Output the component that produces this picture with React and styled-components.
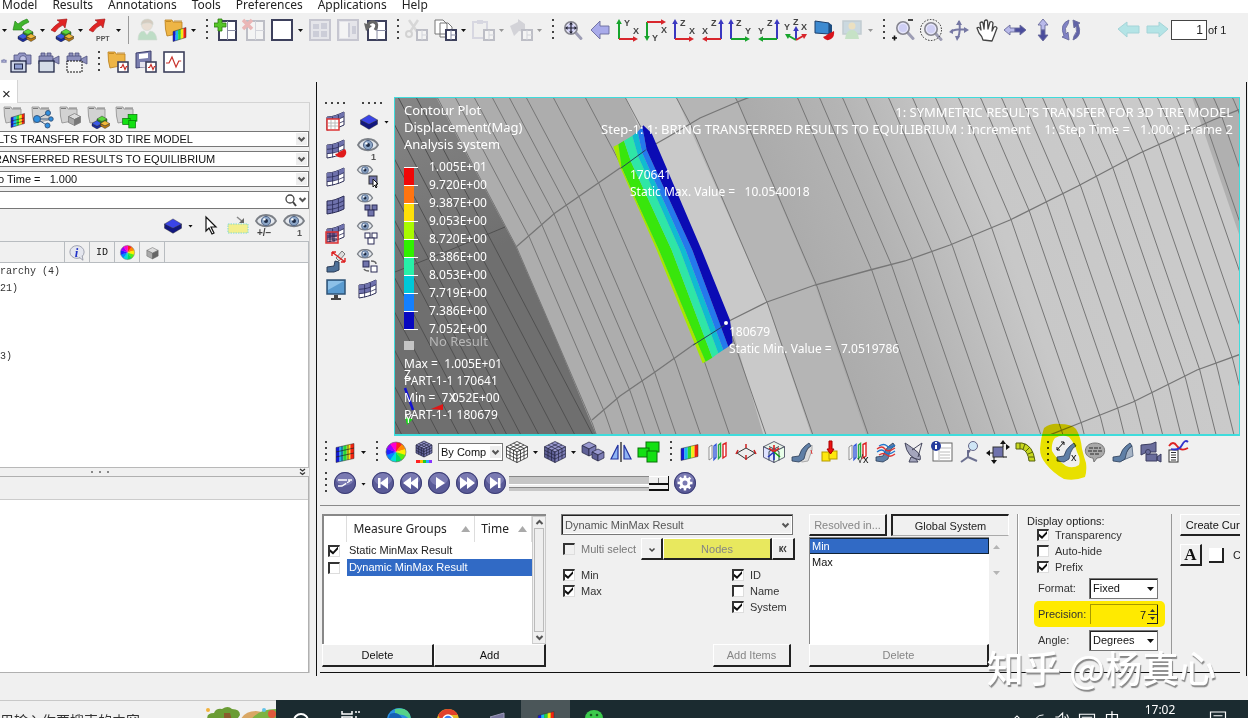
import React from "react";
import styled, { createGlobalStyle } from "styled-components";

const Global = createGlobalStyle`
  * { box-sizing: border-box; }
  body { margin: 0; background: #f0f0f0; }
  button, input, select { font: inherit; color: inherit; margin: 0; }
`;

/* ------------------------------------------------------------ icon pieces */

const Cube = ({ x, y, r, c = ["#9a9ad0", "#5f6096", "#7b7cb4"], grid, line = "#23243f" }) => {
  const h = r * 0.5;
  const third = [1 / 3, 2 / 3];
  return (
    <g stroke={line} strokeWidth=".7" strokeLinejoin="round">
      <path fill={c[0]} d={`M${x} ${y - r}l${r} ${h}l${-r} ${h}l${-r} ${-h}z`} />
      <path fill={c[1]} d={`M${x - r} ${y - h}l${r} ${h}v${r}l${-r} ${-h}z`} />
      <path fill={c[2]} d={`M${x + r} ${y - h}l${-r} ${h}v${r}l${r} ${-h}z`} />
      {grid &&
        third.map((t) => (
          <path
            key={t}
            fill="none"
            d={`M${x - r} ${y - h + r * t}l${r} ${h}l${r} ${-h}
               M${x - r + r * t} ${y - h + h * t}v${r}M${x + r - r * t} ${y - h + h * t}v${r}
               M${x - r + r * t} ${y - h + h * t}l${r} ${-h}M${x + r - r * t} ${y - h + h * t}l${-r} ${-h}`}
          />
        ))}
    </g>
  );
};

const Slab = ({ x, y, w = 5, c, d }) => (
  <g stroke="#1b1b1b" strokeWidth=".4">
    <path fill={d} d={`M${x - w} ${y}l${w} ${w * 0.5}l${w} ${-w * 0.5}v${w * 0.5}l${-w} ${w * 0.6}l${-w} ${-w * 0.6}z`} />
    <path fill={c} d={`M${x} ${y - w * 0.6}l${w} ${w * 0.6}l${-w} ${w * 0.5}l${-w} ${-w * 0.5}z`} />
  </g>
);

const Slabs = () => (
  <g>
    <Slab x={16} y={14} c="#59d83a" d="#2a9a1c" />
    <Slab x={11} y={18.5} c="#3c5be8" d="#1a2b9c" />
    <Slab x={19} y={18.5} w={4.6} c="#f0b83a" d="#b87a12" />
  </g>
);

const Mesh = ({ cells = "#6f72ad", line = "#2a2b55", partial }) => (
  <g stroke={line} strokeWidth="1" fill="none">
    <path fill={partial ? "#fff" : cells} d="M3 8C9 8 13 6 20 3V16C14 19 9 20 3 21Z" />
    {partial && <path fill={cells} stroke="none" d="M3 8C9 8 13 6 20 3V8L14.500 10V14C10 16 8 16 3 17Z" />}
    <path strokeWidth=".8" d="M3 12.300C9 12 14 11 20 7.600M3 16.600C9 16.500 14 15 20 12M8.600 7.600V20.300M14.400 5.800V18.500" />
  </g>
);

const rainbow = ["#1418d8", "#17b6f2", "#27d638", "#f4ea14", "#f5230f"];
const Rainbow = ({ x = 3, y = 3, w = 3.6, h = 15, line = "#333" }) => (
  <g>
    {rainbow.map((c, i) => (
      <path key={c} fill={c} d={`M${x + i * w} ${y + 3.5 - i * 0.8}l${w} -.8v${h}l${-w} .8z`} />
    ))}
    <path fill="none" stroke={line} strokeWidth=".5" d={`M${x} ${y + 3.5}l${w * 5} -4v${h}l${-w * 5} 4z`} />
  </g>
);

const Folder = ({ gold }) => (
  <g strokeWidth=".8">
    <path
      fill={gold ? "#eeb546" : "#d2d2d2"}
      stroke={gold ? "#b97f1c" : "#8d8d8d"}
      d="M2 2h7l1 2h9v11l-15 3Q2 12 2 2Z"
    />
    <path fill="none" stroke={gold ? "#b97f1c" : "#666"} d="M3 3.500h5M11 3h8" />
  </g>
);

const Eye = ({ y = 8, s = 1 }) => (
  <g transform={`translate(12 ${y}) scale(${s})`}>
    <path fill="#e4e8ee" stroke="#7c8087" strokeWidth="1.8" d="M-10 0C-6-8 6-8 10 0C6 7 -6 7 -10 0Z" />
    <circle r="4.6" fill="#8ba5c6" stroke="#54688a" />
    <circle r="2" fill="#1d2a44" />
    <circle cx="-1.6" cy="-1.6" r="1.2" fill="#fff" />
  </g>
);

const Page = ({ x = 3, y = 3, w = 19, h = 19, split = true }) => (
  <g fill="#fff" stroke="#3d405c" strokeWidth="2">
    <rect x={x} y={y} width={w} height={h} />
    {split && (
      <path strokeWidth="1" stroke="#8b8ea6" fill="none" d={`M${x + w / 2} ${y}v${h}M${x + w / 2} ${y + h / 2}h${w / 2}`} />
    )}
  </g>
);

const Arm = ({ c = "#5f7fa6" }) => (
  <path
    fill={c}
    stroke="#2b3c57"
    strokeWidth=".8"
    d="M2 17L9 16Q11 9 15 6L19 3L21 6L18 8Q15 12 14 19L9 22L2 21Z"
  />
);

const Lens = ({ x = 11, y = 10 }) => (
  <g>
    <path stroke="#9d9db4" strokeWidth="3" strokeLinecap="round" d={`M${x + 5} ${y + 5}l5 5.5`} />
    <circle cx={x} cy={y} r="6.2" fill="#e6e6fb" stroke="#85858f" strokeWidth="1.6" />
    <circle cx={x} cy={y} r="4" fill="#cfcff4" />
  </g>
);

const Camera = () => (
  <g fill="#9295c4" stroke="#4b4e7c" strokeWidth=".8">
    <path d="M5 5h4l1-2h6l1 2h5v9H5z" />
    <circle cx="14" cy="9" r="3.4" fill="#c5c7e6" />
  </g>
);

const Video = () => (
  <g fill="#8d90bd" stroke="#4b4e7c" strokeWidth=".8">
    <path d="M2 6h14v8H2zM16 9l6-3v8l-6-3zM4 6V3h4v3M10 6V3h4v3" />
  </g>
);

const Wave = ({ x, y, w }) => (
  <g>
    <rect x={x} y={y} width={w} height={w} fill="#fff" stroke="#3d405c" strokeWidth="1.6" />
    <path
      fill="none"
      stroke="#c8322b"
      strokeWidth="1.2"
      d={`M${x + 2} ${y + w * 0.55}l${w * 0.15} 0l${w * 0.15} ${-w * 0.3}l${w * 0.2} ${w * 0.5}l${w * 0.14} ${-w * 0.3}h${w * 0.12}`}
    />
  </g>
);

const Head = ({ x, y, a, c }) => <polygon fill={c} points="-5,-2.8 0,0 -5,2.8" transform={`translate(${x} ${y}) rotate(${a})`} />;

const R = "#d8262c";
const G = "#17a42c";
const B = "#3a38c0";

const Axes = ({ up, side, upC, sideC, flip, down }) => {
  const x0 = flip ? 21 : 3;
  const x1 = flip ? 2 : 22;
  const y0 = down ? 4 : 21;
  const y1 = down ? 23 : 1;
  return (
    <g fontFamily="Liberation Sans, sans-serif" fontWeight="700" fontSize="9" fill="#444">
      <path stroke={upC} strokeWidth="2" d={`M${x0} ${y0}V${down ? 18 : 6}`} />
      <path stroke={sideC} strokeWidth="2" d={`M${x0} ${y0}H${flip ? 6 : 18}`} />
      <Head x={x0} y={y1} a={down ? 90 : -90} c={upC} />
      <Head x={x1} y={y0} a={flip ? 180 : 0} c={sideC} />
      <text x={flip ? 11 : 8} y={down ? 23 : 8}>{up}</text>
      <text x={flip ? 2 : 17} y={down ? 15 : 16}>{side}</text>
    </g>
  );
};

const Round = ({ children }) => (
  <g>
    <circle cx="12" cy="12" r="11" fill="#5a5b98" />
    <ellipse cx="12" cy="8" rx="9" ry="6.5" fill="#8788bd" opacity=".7" />
    <circle cx="12" cy="12" r="10.5" fill="none" stroke="#3c3d74" />
    <g fill="#fff">{children}</g>
  </g>
);

const Wheel = ({ x = 12, y = 12, r = 10 }) => {
  const cs = ["#f22", "#f80", "#fe0", "#5e1", "#0d6", "#0dd", "#08f", "#22f", "#90f", "#f0c"];
  return (
    <g>
      {cs.map((c, i) => {
        const a = (i / 10) * 2 * Math.PI - 1.57;
        const b = ((i + 1.1) / 10) * 2 * Math.PI - 1.57;
        return (
          <path
            key={c}
            fill={c}
            d={`M${x} ${y}L${x + r * Math.cos(a)} ${y + r * Math.sin(a)}A${r} ${r} 0 0 1 ${x + r * Math.cos(b)} ${y + r * Math.sin(b)}Z`}
          />
        );
      })}
      <circle cx={x} cy={y} r={r} fill="none" stroke="#666" strokeWidth=".6" />
    </g>
  );
};

const Dbl = ({ d, fill = "#8a8cc8" }) => <path fill={fill} stroke="#6a6b9c" strokeWidth=".9" strokeLinejoin="round" d={d} />;

const greenSquares = (
  <g fill="#12e012" stroke="#067306" strokeWidth="1">
    <rect x="9" y="2" width="13" height="10" />
    <rect x="1" y="8" width="11" height="9" />
    <rect x="10" y="11" width="10" height="11" />
  </g>
);

const threeBoxes = (fill) => (
  <g fill={fill} stroke="#2a2b55">
    <rect x="9" y="12" width="5" height="5" />
    <rect x="16" y="12" width="5" height="5" />
    <rect x="12" y="17" width="6" height="6" />
  </g>
);

const strips = (
  <g fill="#fff" strokeWidth="1.4">
    <path stroke="#777" strokeWidth=".8" d="M3 7l3-2v13l-3 2z" />
    <path stroke="#3358d8" d="M8 6l2-1.500v13l-2 2z" />
    <path stroke="#27a844" d="M12.500 5l2-1.500v13l-2 2z" />
    <path stroke="#d22" d="M17 4.500l3-1.500v13l-3 2z" />
  </g>
);

const icons = {
  importModel: (
    <g>
      <path fill="#3fb52b" stroke="#1f7a12" strokeWidth=".6" d="M1 12L3 3l3 3Q9 3 15 1l2 3Q12 6 9 9l3 3z" />
      <Slabs />
    </g>
  ),
  exportModel: (
    <g>
      <path fill="#e02424" stroke="#9c1010" strokeWidth=".6" d="M17 1L7 2l3 2Q4 8 1 12l4 2Q8 9 13 7l2 3z" />
      <Slabs />
    </g>
  ),
  exportPpt: (
    <g>
      <path fill="#e02424" stroke="#9c1010" strokeWidth=".6" d="M17 1L7 2l3 2Q4 8 1 12l4 2Q8 9 13 7l2 3z" />
      <text x="8" y="23" fontFamily="Liberation Sans, sans-serif" fontSize="7" fontWeight="700" fill="#555">PPT</text>
    </g>
  ),
  person: (
    <g stroke="#8aa48a" strokeWidth=".6">
      <circle cx="12" cy="7" r="5.500" fill="#d9b08c" />
      <path fill="#8d6d42" d="M6 7Q6 1 13 1q6 1 5 6q-3-3-7-2q-3 0-5 2z" />
      <path fill="#3fae5c" d="M3 22q0-9 6-9l3 4 3-4q6 0 7 9z" />
    </g>
  ),
  folderRainbow: (
    <g>
      <Folder gold />
      <Rainbow x={10} y={10} w={2.600} h={10} />
    </g>
  ),
  pageAdd: (
    <g>
      <Page x={5} y={3} w={17} h={19} />
      <path fill="#56c628" stroke="#2c7a10" strokeWidth=".8" d="M4 1h4v4h4v4H8v4H4V9H0V5h4z" />
    </g>
  ),
  pageDelete: (
    <g>
      <Page x={5} y={3} w={17} h={19} />
      <path stroke="#d22" strokeWidth="3.500" d="M1 2l9 9M10 2l-9 9" />
    </g>
  ),
  window: <Page x={2} y={2} w={20} h={20} split={false} />,
  pageSwap: (
    <g>
      <rect x="2" y="2" width="20" height="20" fill="#c9cbdc" stroke="#5b5e80" strokeWidth="2" />
      <path fill="#72769c" d="M5 6h6v5H5zM13 5h6v6h-6zM5 13h6v6H5zM13 13h6v6h-6z" />
    </g>
  ),
  pageExpand: (
    <g>
      <rect x="2" y="2" width="20" height="20" fill="#c9cbdc" stroke="#5b5e80" strokeWidth="2" />
      <path fill="#fff" d="M4 4h8v16H4z" />
      <path fill="#72769c" d="M12 5h2v14h-2zM16 8h4v8h-4z" />
    </g>
  ),
  pageRevert: (
    <g>
      <Page x={4} y={3} w={18} h={19} />
      <path fill="none" stroke="#666" strokeWidth="3" d="M3 8Q6 3 10 4q5 2 1 8" />
      <path fill="#666" d="M0 5l8 3-6 5z" />
    </g>
  ),
  cut: (
    <g>
      <path stroke="#999" strokeWidth="2.500" fill="none" d="M4 2l9 13M13 2L5 14" />
      <circle cx="4" cy="16" r="3" fill="none" stroke="#888" strokeWidth="2" />
      <Page x={12} y={12} w={10} h={10} />
    </g>
  ),
  copy: (
    <g>
      <path fill="#fff" stroke="#777" strokeWidth="1" d="M2 2h8l4 4v10H2zM7 5h8l4 4v10H7z" />
      <Page x={13} y={12} w={10} h={10} />
    </g>
  ),
  paste: (
    <g>
      <path fill="#eee" stroke="#99b" strokeWidth="2" d="M2 4h14v16H2z" />
      <path fill="#99b" d="M6 2h6v4H6z" />
      <Page x={13} y={12} w={10} h={10} />
    </g>
  ),
  sendTo: (
    <g>
      <path fill="#8a8a9c" d="M1 8l8-4V1l7 5v8l-6-1-5 5z" />
      <Page x={13} y={12} w={10} h={10} />
    </g>
  ),
  zoomFit: (
    <g>
      <Lens />
      <path stroke="#223" strokeWidth="1.200" d="M11 5v10M6 10h10" />
      <path fill="#223" d="M11 4l2 2.500H9zM11 16l2-2.500H9zM5 10l2.500-2v4zM17 10l-2.500-2v4z" />
    </g>
  ),
  back: <Dbl fill="#a9abea" d="M3 12L12 3v5h9v8h-9v5z" />,
  axXY: <Axes up="Y" side="X" upC={G} sideC={R} />,
  axXYd: <Axes up="Y" side="X" upC={G} sideC={R} down />,
  axXZ: <Axes up="Z" side="X" upC={B} sideC={R} />,
  axXZf: <Axes up="Z" side="X" upC={B} sideC={R} flip />,
  axYZ: <Axes up="Z" side="Y" upC={B} sideC={G} />,
  axYZf: <Axes up="Z" side="Y" upC={B} sideC={G} flip />,
  iso: (
    <g fontFamily="Liberation Sans, sans-serif" fontWeight="700" fontSize="9" fill="#444">
      <path stroke={B} strokeWidth="2" d="M12 21v-9" />
      <path stroke={G} strokeWidth="2" d="M12 22l-7-4" />
      <path stroke={R} strokeWidth="2" d="M12 22l7-4" />
      <Head x={12} y={8} a={-90} c={B} />
      <Head x={1} y={16} a={210} c={G} />
      <Head x={23} y={16} a={-30} c={R} />
      <text x="0" y="12">Y</text>
      <text x="9" y="7">Z</text>
      <text x="17" y="12">X</text>
    </g>
  ),
  screenPaint: (
    <g>
      <path fill="#3d8ad0" stroke="#1d3f6b" d="M3 3l14 2v11L3 15z" />
      <path fill="#1e4d80" d="M17 5l3 2v10l-3-1z" />
      <path fill="#d8141c" d="M11 19q3-1 5-3l6-3q1 5-3 8-5 3-8-2z" />
    </g>
  ),
  screenUser: (
    <g>
      <path fill="#6fa0b8" stroke="#4f7384" strokeWidth="1.500" d="M3 3h18v13H3z" />
      <circle cx="12" cy="8" r="3.500" fill="#e0b84a" />
      <path fill="#5cc05c" d="M5 21q1-9 7-9t7 9z" />
    </g>
  ),
  zoomPM: (
    <g>
      <Lens x={12} y={10} />
      <path stroke="#111" strokeWidth="1.600" d="M17 2h5M1 20h5M3.500 17.500v5" />
    </g>
  ),
  zoomBox: (
    <g>
      <Lens x={12} y={11} />
      <ellipse cx="12" cy="12" rx="10.500" ry="10.500" fill="none" stroke="#222" strokeDasharray="1.500 1.500" />
    </g>
  ),
  rotate3d: (
    <g fill="none" stroke="#7678a4" strokeWidth="2">
      <path d="M4 13q8-3 16-1M11 20q3-8 1-17" />
      <g fill="#7678a4" stroke="none">
        <path d="M2 14l4-3v5zM22 12l-5-3v6zM12 2l3 5h-6zM10 23l-2-5h5z" />
      </g>
    </g>
  ),
  hand: (
    <path
      fill="#fff"
      stroke="#444"
      strokeWidth="1.300"
      strokeLinejoin="round"
      d="M8 22Q7 18 4 15L2 10q2-2 4 2L5 5q2-2 3 0l1 6 .500-8q2-2 3 0l.500 8 2-7q2-1 3 1l-1 8 2-4q2-1 3 1l-3 8-2 5z"
    />
  ),
  leftRight: (
    <g>
      <Dbl fill="#b9baea" d="M1 12l6-5v3h5v4H7v3z" />
      <Dbl fill="#4a4c9c" d="M23 12l-6-5v3h-5v4h5v3z" />
    </g>
  ),
  upDown: (
    <g>
      <Dbl fill="#b9baea" d="M12 1l5 6h-3v5h-4V7H7z" />
      <Dbl fill="#4a4c9c" d="M12 23l5-6h-3v-5h-4v5H7z" />
    </g>
  ),
  spin: (
    <g>
      <Dbl fill="#8082c6" d="M10 2Q0 6 5 18l-2 1 7 3-1-8-2 2Q5 10 9 6z" />
      <Dbl fill="#6163a8" d="M14 22Q24 18 19 6l2-1-7-3 1 8 2-2q2 6-2 10z" />
    </g>
  ),
  prev: <path fill="#b4e4e6" stroke="#a4d4d8" d="M1 11l9-7v4h12v7H10v4z" />,
  next: <path fill="#b4e4e6" stroke="#a4d4d8" d="M23 11l-9-7v4H2v7h12v4z" />,
  captureArea: (
    <g>
      <Camera />
      <rect x="2" y="11" width="15" height="11" fill="#cdd5e6" stroke="#222847" strokeWidth="1.300" />
      <rect x="5.500" y="14" width="8" height="5" fill="#8f9ed0" stroke="#222847" />
    </g>
  ),
  camera: <Camera />,
  videoArea: (
    <g>
      <Video />
      <rect x="2" y="11" width="15" height="11" fill="#d5dde8" stroke="#222847" strokeWidth="1.300" />
    </g>
  ),
  videoDash: (
    <g>
      <Video />
      <rect x="2" y="11" width="15" height="11" fill="#f4f4f4" stroke="#111" strokeDasharray="2 1" />
    </g>
  ),
  folderWave: (
    <g>
      <Folder gold />
      <Wave x={12} y={12} w={10} />
    </g>
  ),
  saveWave: (
    <g>
      <path fill="#7a7eae" stroke="#3d3f6c" d="M2 3l15-2v15l-15 2z" />
      <path fill="#fff" d="M5 4l9-1v5l-9 1z" />
      <path fill="#e4e4ee" d="M6 12h7v5l-7 .5z" />
      <Wave x={12} y={12} w={10} />
    </g>
  ),
  wave: <Wave x={2} y={2} w={20} />,
  folderMesh: (
    <g>
      <Folder />
      <Rainbow x={9} y={9} w={2.700} h={10} />
      <path stroke="#222" strokeWidth=".6" d="M9 16l13-3M9 19.500l13-3.500" />
    </g>
  ),
  folderNodes: (
    <g>
      <Folder />
      <g stroke="#3a5a80" fill="#2f8fe0">
        <path d="M7 14l11-6M7 14h14M7 14l11 7" />
        <circle cx="7" cy="14" r="3.500" />
        <circle cx="18" cy="8" r="2.500" />
        <circle cx="21" cy="14" r="2.200" />
        <circle cx="17.500" cy="20.500" r="2.500" />
      </g>
    </g>
  ),
  folderCube: (
    <g>
      <Folder />
      <Cube x={16.500} y={14.500} r={6} c={["#ddd", "#aaa", "#777"]} line="#777" />
    </g>
  ),
  folderSlabs: (
    <g>
      <Folder />
      <Slabs />
    </g>
  ),
  folderGreen: (
    <g>
      <Folder />
      <g transform="translate(8 8) scale(.68)">{greenSquares}</g>
    </g>
  ),
  slab: <Slab x={13} y={11} w={8.500} c="#3a44e6" d="#12177f" />,
  cursor: <path fill="#fff" stroke="#111" strokeWidth="1.200" d="M8 4v14l3-3 3 6 2-1-3-6h5z" />,
  highlight: (
    <g>
      <rect x="2" y="11" width="20" height="9" fill="#f3ef8e" stroke="#7fd8d0" strokeDasharray="1.500 1" />
      <path stroke="#888" strokeWidth="1.500" d="M11 4l6 5" />
      <path fill="#666" d="M18 10v-5l-5 5z" />
    </g>
  ),
  eyePM: (
    <g>
      <Eye />
      <text x="3" y="23" fontFamily="Liberation Sans, sans-serif" fontSize="10" fontWeight="700" fill="#444">+/−</text>
    </g>
  ),
  eyeOne: (
    <g>
      <Eye />
      <text x="15" y="23" fontFamily="Liberation Sans, sans-serif" fontSize="9" fontWeight="700" fill="#555">1</text>
    </g>
  ),
  info: (
    <g>
      <ellipse cx="12" cy="12" rx="9.500" ry="8.500" fill="#e4e6ee" stroke="#888c9c" />
      <path fill="#e4e6ee" stroke="#888c9c" d="M15 19l5 4-1-6" />
      <text x="9" y="18" fontFamily="Liberation Serif, serif" fontStyle="italic" fontSize="17" fontWeight="700" fill="#2132c8">i</text>
    </g>
  ),
  wheel: <Wheel />,
  greyCube: <Cube x={12} y={13} r={8} c={["#ddd", "#aaa", "#666"]} line="#666" />,
  meshRed: (
    <g>
      <Mesh partial />
      <rect x="3" y="10" width="12" height="11" fill="#fff" stroke="#d33" strokeWidth="1.500" />
      <path stroke="#bbb" d="M7 11v9M11 11v9M4 14h10M4 17h10" />
    </g>
  ),
  meshPaint: (
    <g>
      <Mesh partial />
      <path fill="#e01b1b" d="M11 17q3 0 4-2l6-3q3 4-1 8-6 2-9-3z" />
    </g>
  ),
  meshPart: <Mesh partial />,
  meshFull: <Mesh />,
  meshRedFull: (
    <g>
      <Mesh partial />
      <rect x="2" y="11" width="12" height="11" fill="#a03a6a" fillOpacity=".35" stroke="#d33" strokeWidth="1.500" />
      <path stroke="#2a2b55" d="M6 12v9M10 12v9M3 15h10M3 18h10" />
    </g>
  ),
  armSwap: (
    <g>
      <path fill="#4d7098" stroke="#2b3c57" d="M3 18l7-1 1-5 4 1v8l-5 2H3z" />
      <path fill="#ddd" stroke="#777" d="M12 9l6-7 3 3-6 7z" />
      <path fill="none" stroke="#d22" strokeWidth="1.400" d="M8 3l13 10M8 3v4M8 3h4M21 13v-4M21 13h-4" />
    </g>
  ),
  monitor: (
    <g>
      <rect x="3" y="3" width="18" height="14" fill="#5a9bd0" stroke="#2f5376" strokeWidth="1.500" />
      <path fill="#8cc0e8" d="M4 4h16L4 13z" />
      <path fill="#444" d="M10 18h4v3h3v2H7v-2h3z" />
    </g>
  ),
  eyePick: (
    <g>
      <g transform="translate(-3 -1)"><Eye y={6} s={0.75} /></g>
      <rect x="13" y="11" width="8" height="8" fill="#7174ac" stroke="#333" />
      <path fill="#fff" stroke="#111" d="M17 14v8l2-2 1 3 1-1-1-3h2z" />
    </g>
  ),
  eyeBoxes: (
    <g>
      <g transform="translate(-3 -1)"><Eye y={6} s={0.75} /></g>
      {threeBoxes("#7174ac")}
    </g>
  ),
  eyeHollow: (
    <g>
      <g transform="translate(-3 -1)"><Eye y={6} s={0.75} /></g>
      {threeBoxes("#fff")}
    </g>
  ),
  eyeReverse: (
    <g>
      <g transform="translate(-3 -1)"><Eye y={6} s={0.75} /></g>
      <rect x="7" y="12" width="6" height="6" fill="#7174ac" stroke="#2a2b55" />
      <rect x="15" y="17" width="6" height="6" fill="#fff" stroke="#2a2b55" />
      <path fill="none" stroke="#666" strokeWidth="1.500" d="M15 12q5 0 5 3M13 22q-4 0-5-2" />
    </g>
  ),
  contour: (
    <g>
      <Rainbow x={3} y={4} w={3.600} h={15} />
      <path stroke="#222" strokeWidth=".7" d="M3 12l18-4M3 17l18-4M9 6v15M15 5v15" />
    </g>
  ),
  rainbowPlain: <Rainbow x={3} y={5} w={3.400} h={12} />,
  cubeColor: (
    <g>
      <Cube x={12} y={9} r={8} grid />
      <path fill="#f22" d="M4 20h4v3H4z" />
      <path fill="#fb0" d="M8 20h3v3H8z" />
      <path fill="#2c2" d="M11 20h3v3h-3z" />
      <path fill="#2af" d="M14 20h3v3h-3z" />
      <path fill="#83f" d="M17 20h3v3h-3z" />
    </g>
  ),
  cubeWire: <Cube x={12} y={12} r={10.500} grid c={["#fff", "#fff", "#fff"]} line="#111" />,
  cubeFull: <Cube x={12} y={12} r={10.500} grid />,
  cubes: (
    <g>
      <Cube x={8} y={9} r={7} />
      <Cube x={17} y={15} r={6} />
    </g>
  ),
  mirror: (
    <g stroke="#2434a0" strokeWidth="1.200">
      <path fill="#8fb4f4" d="M9 5v14H2zM15 5v14h7z" />
      <path stroke="#111" d="M12 2v20" />
    </g>
  ),
  green: greenSquares,
  strips,
  vectorPlane: (
    <g fill="none" stroke="#333">
      <path fill="#eee" d="M3 13l9-5 9 5-9 6z" />
      <path stroke="#c22" strokeWidth="1.500" d="M12 8V4M2 14l2-4M22 14l-2-4M12 20v-5" />
    </g>
  ),
  cubeVector: (
    <g>
      <Cube x={12} y={12} r={10.500} c={["#e8f4e8", "#dfe3ff", "#e9ffe9"]} />
      <g fill="none" stroke="#345">
        <path d="M7 6.500l10 5v9M17 6.500l-10 5v9" />
      </g>
      <path fill="none" strokeWidth="1.600" stroke="#d22" d="M12 12V5M7 8l5 4 5-4" />
      <path fill="none" strokeWidth="1.600" stroke="#23b" d="M12 12l-6 5M12 12v8" />
      <path fill="none" strokeWidth="1.600" stroke="#191" d="M12 12l6 5" />
    </g>
  ),
  armDeform: (
    <g>
      <path fill="#ddd" stroke="#aaa" d="M7 19l7-1 3-8 5-5v5l-4 11-6 1z" />
      <Arm />
      <path fill="none" stroke="#d33" d="M21 10l1 4" />
    </g>
  ),
  isoValue: (
    <g stroke="#b59a00" fill="#ffe80f">
      <rect x="4" y="12" width="8" height="9" />
      <rect x="11" y="11" width="8" height="8" />
      <path stroke="#a00" fill="#e11" d="M11 1h3v8h2l-3.500 5L9 9h2z" />
    </g>
  ),
  stripsX: (
    <g>
      {strips}
      <text x="11" y="23" fontFamily="Liberation Sans, sans-serif" fontSize="11" fill="#111">√x</text>
    </g>
  ),
  stream: (
    <g>
      <Arm />
      <path fill="none" stroke="#d33" strokeWidth="1.300" d="M3 9q5-4 8 0t10-1M5 15q5-3 8 0t8-1" />
      <path fill="none" stroke="#27c" strokeWidth="1.300" d="M3 12q5-4 8 0t10-1M5 6q5-3 8 0t8-1" />
    </g>
  ),
  dish: (
    <g fill="#a4a6bd" stroke="#44465c">
      <path d="M3 3q2 15 15 17Q20 15 13 10 5 4 3 3z" />
      <path fill="none" d="M10 10l10-7M20 3l-4 14" />
      <path d="M9 17l-2 5h9l-2-3z" />
    </g>
  ),
  infoTable: (
    <g>
      <rect x="3" y="3" width="19" height="18" fill="#fff" stroke="#666" />
      <path stroke="#bbb" d="M10 8h12M10 12h10M10 15h10M10 18h10M9 8v13" />
      <circle cx="6" cy="6" r="5" fill="#233a9c" />
      <path stroke="#fff" strokeWidth="2" d="M6 5v4M6 2v1.500" />
    </g>
  ),
  tripodLens: (
    <g>
      <path stroke="#6c7090" strokeWidth="2" fill="none" d="M10 10v7l-7 5M10 17l9 4" />
      <circle cx="15" cy="6" r="4.500" fill="#cfe6f6" stroke="#668" />
      <path stroke="#668" strokeWidth="2" d="M12 10l-2 3" />
    </g>
  ),
  moveBox: (
    <g>
      <rect x="7" y="7" width="10" height="10" fill="#6f72ad" stroke="#333" />
      <path stroke="#111" d="M17 4v3M21 17h-4M4 13h3M8 21v-4" />
      <path fill="#111" d="M17 0l3 4h-6zM8 24l3-4H5zM0 13l4-3v6zM24 7l-4-3v6z" />
    </g>
  ),
  pipe: (
    <g fill="#c8d820" stroke="#55600a" strokeWidth="1">
      <path d="M2 3h6Q19 5 21 21h-6Q14 11 8 9L2 9z" />
      <path fill="none" d="M6 3v6M11 3.500l-2 6M16 7l-4 4M19 12l-5 2M20 17h-5" />
    </g>
  ),
  measure: (
    <g>
      <Arm />
      <path fill="none" stroke="#111" d="M2 10l7-8M2 10V7M2 10h3M9 2H6M9 2v3" />
      <text x="16" y="21" fontFamily="Liberation Sans, sans-serif" fontSize="11" fill="#111">x</text>
    </g>
  ),
  note: (
    <g fill="#a9a9a9" stroke="#777">
      <path d="M12 3c13 0 12 15 2 15l-3 4-1-4C-1 17 0 3 12 3z" />
      <path stroke="#555" strokeWidth="1.300" strokeDasharray="4 1" d="M6 8h12M5 11h14M7 14h10" />
    </g>
  ),
  arm: (
    <g>
      <path fill="#a6b4c6" stroke="#67788f" d="M10 21l6-10 5-5 1 10z" />
      <Arm />
    </g>
  ),
  cubeVideo: (
    <g fill="#6a6d9c" stroke="#3b3d60">
      <path d="M2 5l10-1 5-2v10H8l-6 3z" />
      <path d="M7 14h11v7H7zM18 17l4-3v8l-4-2z" />
      <circle cx="9" cy="12" r="2.500" />
    </g>
  ),
  report: (
    <g fill="none">
      <rect x="2" y="10" width="9" height="12" fill="#fff" stroke="#333" />
      <path stroke="#333" d="M4 12.500h5M4 15h5M4 17.500h5M4 20h5" />
      <path stroke="#d22" strokeWidth="1.800" d="M2 6q4-6 8 0t11 2" />
      <path stroke="#33c" strokeWidth="1.800" d="M4 9q8 2 11-4t6-3" />
    </g>
  ),
  animMode: <Round><path fill="none" stroke="#fff" strokeWidth="1.300" d="M5 9h14M5 15h4l8-5" strokeDasharray="9 1" /></Round>,
  first: <Round><path d="M7 7h2.500v10H7zM17 6v12l-8-6z" /></Round>,
  rewind: <Round><path d="M12 6v12l-8-6zM19 6v12l-8-6z" /></Round>,
  play: <Round><path d="M9 6v12l9-6z" /></Round>,
  forward: <Round><path d="M5 6v12l8-6zM12 6v12l8-6z" /></Round>,
  last: <Round><path d="M7 6v12l8-6zM15 7h2.500v10H15z" /></Round>,
  gear: (
    <Round>
      <circle cx="12" cy="12" r="4" fill="none" stroke="#fff" strokeWidth="3" />
      {[0, 45, 90, 135, 180, 225, 270, 315].map((a) => (
        <rect key={a} x="10.800" y="4.500" width="2.500" height="3.500" transform={`rotate(${a} 12 12)`} />
      ))}
    </Round>
  ),
  cortana: <circle cx="12" cy="13" r="7" fill="none" stroke="#fff" strokeWidth="2" />,
  taskView: <path fill="none" stroke="#fff" strokeWidth="1.500" d="M4 3v3h10V3M4 9h10v9H4zM18 3v2M18 8v12M21 3v2" />,
  edge: (
    <g>
      <circle cx="12" cy="12" r="12" fill="#2a8fe0" />
      <path fill="#54d28a" d="M8 1q16-3 16 12-6-8-16-6z" />
      <path fill="#1560b4" d="M3 6q8-3 12 4l-5 2q-6 2-9 0z" />
    </g>
  ),
  chrome: (
    <g>
      <circle cx="12" cy="12" r="11" fill="#e5b926" />
      <path fill="#e2402c" d="M2 7Q6 1 12 1q7 0 10 6H12L6 14z" />
      <circle cx="12" cy="12" r="5" fill="#3c7ef0" stroke="#fff" strokeWidth="1.500" />
    </g>
  ),
  hw: <path fill="#77759c" stroke="#9d9bb8" d="M5 9l14-4v14l-7 3v-8z" />,
  hwActive: <Rainbow x={4} y={4} w={3.200} h={13} />,
  wechat: (
    <g>
      <ellipse cx="11" cy="10" rx="9" ry="8" fill="#3ccb4c" />
      <circle cx="8" cy="7" r="1.300" fill="#175c20" />
      <circle cx="14" cy="7" r="1.300" fill="#175c20" />
    </g>
  ),
  chevUp: <path fill="none" stroke="#fff" strokeWidth="1.800" d="M5 12l7-7 7 7" />,
  net: <path fill="none" stroke="#fff" strokeWidth="1.600" d="M4 12Q10 4 18 5M8 15q4-4 9-4" />,
  speaker: <path fill="none" stroke="#fff" strokeWidth="1.600" d="M2 9h5l6-6v18M16 8q3 4 0 8M19 5q5 6 0 13" />,
  keyboard: <path fill="none" stroke="#fff" strokeWidth="1.600" d="M2 7h20v12H2zM5 11h14" />,
  notify: <path fill="none" stroke="#fff" strokeWidth="1.600" d="M2 4h20v15H2zM6 9h12" />,
};

const Glyph = ({ name, size = 24 }) => (
  <svg width={size} height={size} viewBox="0 0 24 24" aria-hidden="true">
    {icons[name]}
  </svg>
);

/* --------------------------------------------------------------- layout */

const Screen = styled.div`
  position: relative;
  display: flex;
  flex-direction: column;
  min-height: 100vh;
  overflow: hidden;
  background: #f0f0f0;
  color: #222;
  font: 11px "Liberation Sans", Arial, sans-serif;
`;

const MenuBar = styled.nav`
  display: flex;
  align-items: flex-start;
  gap: 15px;
  height: 13px;
  padding-left: 2px;
  background: #fff;
  font: 12px/10px "Noto Sans", "Open Sans", sans-serif;
`;

const MenuItem = styled.button`
  padding: 0;
  border: 0;
  background: none;
`;

const ToolRow = styled.div`
  display: flex;
  align-items: center;
  flex: none;
  height: ${(p) => p.$h || 32}px;
  padding-left: ${(p) => p.$pad || 0}px;
  white-space: nowrap;
`;

const ToolButton = styled.button`
  position: relative;
  display: flex;
  flex: none;
  align-items: center;
  justify-content: center;
  width: ${(p) => p.$w || 28}px;
  height: 28px;
  padding: 0;
  border: 0;
  background: none;
  opacity: ${(p) => (p.disabled ? 0.28 : 1)};
`;

const DropButton = styled.button`
  flex: none;
  width: 10px;
  height: 20px;
  padding: 2px 0 0 2px;
  border: 0;
  background: none;
  opacity: ${(p) => (p.disabled ? 0.4 : 1)};
  &::after {
    content: "";
    display: block;
    width: 5px;
    height: 3px;
    background: #111;
    clip-path: polygon(0 0, 100% 0, 50% 100%);
  }
`;

const Grip = styled.span`
  flex: none;
  width: 13px;
  height: 22px;
  padding: 0 4px 0 7px;
  background: repeating-linear-gradient(#444 0 2px, transparent 2px 6px) content-box;
`;

const Rule = styled.span`
  flex: none;
  width: 9px;
  height: 28px;
  background: linear-gradient(#9a9a9a, #9a9a9a) 4px 0 / 1px 100% no-repeat;
`;

const Spacer = styled.span`
  flex: none;
  width: ${(p) => p.$w}px;
`;

const ClippedTool = styled.span`
  display: flex;
  flex: none;
  justify-content: flex-end;
  width: 7px;
  overflow: hidden;
`;

const PageInput = styled.input`
  width: 36px;
  height: 20px;
  padding: 0 3px;
  border: 1px solid #444;
  background: #fff;
  font-size: 12px;
  text-align: right;
`;

const PageTotal = styled.label`
  padding-left: 1px;
  font-size: 11px;
`;

const Body = styled.div`
  display: grid;
  flex: 1;
  grid-template-columns: 310px minmax(0, 1fr);
`;

/* ----------------------------------------------------------- left panel */

const Browser = styled.aside`
  display: flex;
  flex-direction: column;
  padding: 2px 0 27px;
`;

const TabRow = styled.div`
  display: flex;
  height: 23px;
  border-bottom: 1px solid #d4d4d4;
`;

const Tab = styled.button`
  width: 18px;
  height: 23px;
  padding: 4px 4px 0 0;
  border: 0;
  border-right: 1px solid #d4d4d4;
  background: #fff;
  font-size: 15px;
  line-height: 20px;
`;

const BrowserBody = styled.div`
  display: flex;
  flex: 1;
  flex-direction: column;
  border-right: 1px solid #cfcfcf;
`;

const FieldStack = styled.div`
  display: flex;
  flex-direction: column;
  gap: 4px;
`;

const SelectFrame = styled.span`
  position: relative;
  display: flex;
  flex: none;
  width: ${(p) => (p.$w ? p.$w + "px" : "auto")};
  height: ${(p) => p.$h || 16}px;
  border: 1px solid #777;
  border-left-width: ${(p) => (p.$open ? 0 : 1)}px;
  background: ${(p) => p.$bg || "#fff"};
  box-shadow: ${(p) => (p.$sunk ? "inset 1px 1px #222, inset -1px -1px #fff" : "none")};
`;

const SelectBox = styled.select`
  flex: 1;
  min-width: 0;
  padding: 0 14px 0 ${(p) => p.$pad || 0}px;
  border: 0;
  background: transparent;
  appearance: none;
  opacity: 1;
  color: ${(p) => (p.disabled ? "#555" : "#111")};
  text-indent: ${(p) => p.$indent || 0}px;
`;

const Chevron = styled.svg`
  position: absolute;
  right: 1px;
  top: 50%;
  width: 11px;
  height: 12px;
  margin-top: -6px;
  background: ${(p) => p.$bg || "#eee"};
  pointer-events: none;
`;

const SearchField = styled.div`
  display: flex;
  align-items: center;
  height: 18px;
  border: 1px solid #777;
  border-left: 0;
  background: #fff;
`;

const SearchInput = styled.input`
  flex: 1;
  min-width: 0;
  height: 16px;
  padding: 0;
  border: 0;
  background: transparent;
`;

const FilterRow = styled.div`
  display: flex;
  align-items: center;
  justify-content: flex-end;
  height: 32px;
  padding-right: 1px;
`;

const ColumnHeads = styled.div`
  display: grid;
  grid-template-columns: 65px repeat(4, 25px) 1fr;
  height: 22px;
  border: 1px solid #b8bcc0;
  border-left: 0;
`;

const ColumnHead = styled.div`
  display: flex;
  align-items: center;
  justify-content: center;
  border-right: 1px solid #b8bcc0;
  font: 10px "Liberation Mono", monospace;
  color: #111;
  &:last-child { border-right: 0; }
`;

const Tree = styled.ul`
  flex: 205 1 0;
  margin: 0;
  padding: 0;
  border-right: 1px solid #b8b8b8;
  border-bottom: 1px solid #b8b8b8;
  background: #fff;
  color: #333;
  font: 10px/17px "Liberation Mono", monospace;
  list-style: none;
`;

const TreeItem = styled.li`
  height: 17px;
`;

const Splitter = styled.div`
  display: flex;
  align-items: center;
  justify-content: space-between;
  height: 8px;
  padding: 0 2px 0 91px;
`;

const SplitDots = styled.span`
  width: 18px;
  height: 2px;
  background: repeating-linear-gradient(90deg, #888 0 2px, transparent 2px 8px);
`;

const Entity = styled.div`
  flex: 174 1 0;
  padding-top: 22px;
  border: 1px solid #b0b0b0;
  border-left: 0;
  background: #f0f0f0;
`;

const EntityBody = styled.div`
  height: 100%;
  border-top: 1px solid #ccc;
  background: #fff;
`;

/* ------------------------------------------------------------ workspace */

const Workspace = styled.main`
  display: flex;
  flex-direction: column;
  min-width: 0;
  margin: 4px 1px 24px 6px;
  padding-top: 15px;
  border: 1px solid #111;
  border-width: 0 1px;
`;

const ViewRow = styled.div`
  display: flex;
  flex: 1;
  min-height: 339px;
  padding-right: 6px;
`;

const SideTools = styled.div`
  display: grid;
  flex: none;
  grid-template-columns: 28px 38px;
  grid-auto-rows: 28px;
  grid-template-rows: 10px;
  align-content: start;
  column-gap: 4px;
  width: 77px;
  padding-left: 5px;
`;

const SideCell = styled.div`
  display: flex;
  align-items: center;
`;

const SideGrip = styled.span`
  width: 20px;
  height: 2px;
  margin: 5px 0 0 ${(p) => p.$in}px;
  background: repeating-linear-gradient(90deg, #444 0 2px, transparent 2px 6px);
`;

const Viewer = styled.section`
  position: relative;
  flex: 1;
  min-width: 0;
  border: solid #3fdcdc;
  border-width: 1px 1px 2px;
  overflow: hidden;
  color: #fff;
  font: 13px/17px "Noto Sans", "Open Sans", sans-serif;
  white-space: pre;
`;

const Scene = styled.svg`
  position: absolute;
  inset: 0;
  width: 100%;
  height: 100%;
`;

const Overlay = styled.div`
  position: absolute;
  left: ${(p) => p.$x}px;
  top: ${(p) => p.$y}px;
  font-size: ${(p) => p.$size || 13}px;
`;

const Title = styled.div`
  position: absolute;
  top: 6px;
  right: 6px;
  text-align: right;
`;

const Legend = styled.div`
  display: grid;
  grid-auto-rows: 18px;
  padding-top: 5px;
  line-height: 18px;
  font-size: 12px;
`;

const LegendRow = styled.div`
  display: flex;
  align-items: center;
  gap: 11px;
`;

const Swatch = styled.span`
  position: relative;
  width: 14px;
  height: 18px;
  top: 9px;
  border-top: 1px solid #fff;
  background: ${(p) => p.$c} 0 0 / 10px 100% no-repeat;
`;

const NoResult = styled(LegendRow)`
  height: 17px;
  gap: 15px;
  color: #b8b8b8;
  font-size: 13px;
`;

const NoSwatch = styled.span`
  width: 10px;
  height: 9px;
  margin-top: 8px;
  background: #c4c4c4;
`;

const Marker = styled.svg`
  position: absolute;
  left: -14px;
  top: -15px;
  width: 52px;
  height: 60px;
  mix-blend-mode: multiply;
  pointer-events: none;
`;

const Frames = styled.input`
  appearance: none;
  width: 160px;
  height: 15px;
  margin: 0 2px 0 0;
  background: linear-gradient(#888 0 1px, #c6c6c6 1px 8px, #fff 8px 9px, #f0f0f0 9px 11px, #888 11px 12px, #c6c6c6 12px 15px);
  &::-webkit-slider-thumb {
    appearance: none;
    width: 20px;
    height: 15px;
    border-right: 1px solid #111;
    background:
      linear-gradient(#888, #888) 9px 2px / 1px 5px no-repeat,
      linear-gradient(#fff 0 1px, #f0f0f0 1px 7px, #111 7px 9px, #f0f0f0 9px 13px, #111 13px 15px);
  }
`;

const Divider = styled.hr`
  width: calc(100% - 9px);
  margin: 6px 6px 0 3px;
  border: 0;
  border-top: 1px solid #8a8a8a;
`;

/* --------------------------------------------------------- measure panel */

const Measure = styled.div`
  display: flex;
  flex: none;
  height: 167px;
  margin: 0 6px 3px 3px;
  padding: 8px 0 5px 2px;
  border-bottom: 1px solid #111;
  overflow: hidden;
`;

const Column = styled.div`
  display: flex;
  flex: ${(p) => (p.$w ? "none" : "1")};
  flex-direction: column;
  min-width: 0;
  width: ${(p) => (p.$w ? p.$w + "px" : "auto")};
  margin-left: ${(p) => p.$gap || 0}px;
`;

const Line = styled.div`
  display: flex;
  align-items: ${(p) => p.$align || "center"};
  justify-content: ${(p) => p.$justify || "flex-start"};
  height: ${(p) => (p.$h ? p.$h + "px" : "auto")};
  gap: ${(p) => p.$gap || 0}px;
  margin-top: ${(p) => p.$mt || 0}px;
  padding-left: ${(p) => p.$pl || 0}px;
  flex: ${(p) => (p.$grow ? 1 : "none")};
  min-height: 0;
`;

const PushButton = styled.button`
  flex: ${(p) => (p.$w ? "none" : 1)};
  width: ${(p) => (p.$w ? p.$w + "px" : "auto")};
  height: ${(p) => p.$h || 23}px;
  padding: 0;
  border: solid;
  border-width: 1px 2px 2px 1px;
  border-color: #fff #222 #222 #fff;
  background: ${(p) => p.$bg || "#f0f0f0"};
  color: ${(p) => (p.disabled ? "#858585" : "#111")};
  white-space: nowrap;
`;

const TableFrame = styled.div`
  display: flex;
  flex: 1;
  min-height: 0;
  border: solid #888;
  border-width: 2px 0 0 2px;
  background: #fff;
`;

const GroupTable = styled.table`
  flex: 1;
  border-collapse: collapse;
  table-layout: fixed;
  align-self: flex-start;
  background: #fff;
`;

const Th = styled.th`
  width: ${(p) => p.$w}px;
  height: 26px;
  padding: 0 4px 0 6px;
  border-right: 1px solid #ddd;
  font: 12px/26px "Noto Sans", "Open Sans", sans-serif;
  text-align: left;
  white-space: nowrap;
`;

const Sort = styled.span`
  float: right;
  width: 9px;
  height: 6px;
  margin-top: 10px;
  background: #aaa;
  clip-path: polygon(50% 0, 100% 100%, 0 100%);
`;

const Td = styled.td`
  height: 17px;
  padding: 0 0 0 ${(p) => p.$pl || 2}px;
  background: ${(p) => (p.$on ? "#316ac5" : "transparent")};
  color: ${(p) => (p.$on ? "#fff" : "#222")};
  line-height: 17px;
  white-space: nowrap;
`;

const ScrollBar = styled.div`
  display: flex;
  flex-direction: column;
  align-items: center;
  justify-content: space-between;
  width: 14px;
  border: 1px solid #ccc;
  background: #f0f0f0;
`;

const ScrollThumb = styled.div`
  flex: 1;
  width: 10px;
  border: 1px solid #bbb;
  background: #eee;
`;

const ArrowMark = styled.svg`
  width: 9px;
  height: 11px;
`;

const Check = styled.input.attrs({ type: "checkbox" })`
  appearance: none;
  flex: none;
  display: block;
  width: 12px;
  height: 12px;
  border: solid;
  border-width: 2px 1px 1px 2px;
  border-color: #333 #ddd #ddd #333;
  background: ${(p) => (p.disabled ? "#f0f0f0" : "#fff")};
  &:checked::after {
    content: "";
    display: block;
    width: 8px;
    height: 8px;
    background: #111;
    clip-path: polygon(0 35%, 38% 65%, 100% 0, 100% 35%, 38% 100%, 0 70%);
  }
`;

const CheckLabel = styled.label`
  display: flex;
  align-items: center;
  gap: 6px;
  height: 16px;
  color: ${(p) => (p.$off ? "#777" : "#333")};
`;

const Sunken = styled.div`
  flex: 1;
  height: 22px;
  border: solid;
  border-width: 2px 1px 1px 2px;
  border-color: #222 #fff #aaa #222;
  color: #222;
  line-height: 20px;
  text-align: center;
`;

const ListBox = styled.ul`
  flex: 1;
  margin: 0;
  padding: 0;
  border: solid #888;
  border-width: 1px 0 0 1px;
  background: #fff;
  list-style: none;
`;

const ListItem = styled.li`
  height: 16px;
  padding-left: 2px;
  line-height: 15px;
  border: 1px solid ${(p) => (p.$on ? "#123" : "transparent")};
  border-left: 0;
  background: ${(p) => (p.$on ? "#316ac5" : "transparent")};
  color: ${(p) => (p.$on ? "#fff" : "#111")};
`;

const ListArrows = styled.div`
  display: flex;
  flex-direction: column;
  gap: 14px;
  width: 20px;
  padding: 5px 0 0 3px;
`;

const Options = styled(Column)`
  padding-left: 9px;
  border: solid #999;
  border-width: 0 1px;
  box-shadow: inset 1px 0 #fff;
`;

const FieldLine = styled.div`
  display: flex;
  align-items: center;
  width: 131px;
  height: 26px;
  margin-left: 7px;
  padding: 0 7px 0 4px;
  border-radius: 5px;
  background: ${(p) => (p.$mark ? "#ffea00" : "transparent")};
`;

const FieldLabel = styled.label`
  flex: 1;
  color: #333;
`;

const NumberFrame = styled.span`
  display: flex;
  width: 68px;
  height: 20px;
  border: solid #a89a00;
  border-width: 1px 0 0 1px;
`;

const NumberBox = styled.input`
  flex: 1;
  min-width: 0;
  padding: 0 1px;
  border: 0;
  background: transparent;
  text-align: right;
`;

const Spin = styled.span`
  display: flex;
  flex-direction: column;
  justify-content: space-evenly;
  align-items: center;
  width: 11px;
  border: solid #222;
  border-width: 0 1px 1px 0;
`;

const ColorButton = styled.button`
  flex: none;
  width: 15px;
  height: 15px;
  padding: 0;
  border: solid;
  border-width: 0 2px 2px 0;
  border-color: #222;
  background: #fff;
`;

const FontButton = styled(PushButton)`
  font: 700 17px/18px "Liberation Serif", serif;
`;

/* --------------------------------------------------------------- taskbar */

const TaskBar = styled.footer`
  display: flex;
  flex: none;
  align-items: flex-start;
  height: 18px;
  overflow: hidden;
  background: #1b2b30;
  color: #fff;
`;

const TaskSearch = styled.div`
  display: flex;
  flex: none;
  justify-content: space-between;
  width: 276px;
  height: 40px;
  border-top: 1px solid #c8c8c8;
  background: #f0f0f0;
  color: #333;
  font: 14px/16px "Noto Sans CJK SC", sans-serif;
`;

const TaskHint = styled.span`
  padding-top: 11px;
`;

const TaskButton = styled.button`
  display: flex;
  flex: none;
  justify-content: center;
  width: ${(p) => p.$w || 49}px;
  height: 40px;
  padding: ${(p) => p.$top || 8}px 0 0;
  border: 0;
  background: ${(p) => (p.$on ? "#4b5659" : "transparent")};
`;

const Tray = styled.div`
  display: flex;
  align-items: flex-start;
  margin-left: auto;
  padding-right: 4px;
`;

const Ime = styled.span`
  width: 24px;
  padding-top: 8px;
  font: 15px/20px "Noto Sans CJK SC", sans-serif;
  text-align: center;
`;

const Clock = styled.time`
  width: 72px;
  padding-top: 2px;
  font: 12px/16px "Noto Sans", sans-serif;
  text-align: center;
`;

const Watermark = styled.div`
  position: absolute;
  right: 32px;
  bottom: 28px;
  color: #fff;
  font: 500 37px/46px "Noto Sans CJK SC", sans-serif;
  text-shadow: 1px 2px 1px #888;
  pointer-events: none;
  white-space: nowrap;
`;

/* ---------------------------------------------------------- scene drawing */

const curveA = [[516, 247], [555, 213], [620, 168], [645, 150], [668, 137], [700, 118], [735, 103], [750, 97]];
const curveB = [[592, 420], [620, 396], [655, 372], [700, 340], [731, 320], [767, 302], [815, 285], [870, 270], [905, 261], [950, 245], [1010, 220], [1078, 186], [1140, 153], [1213, 120], [1241, 109]];
const curveC = [[1047, 436], [1080, 423], [1133, 402], [1197, 370], [1241, 354]];

const heightAt = (curve, x, before, after) => {
  if (x < curve[0][0]) return before;
  for (let i = 1; i < curve.length; i++) {
    const [x0, y0] = curve[i - 1];
    const [x1, y1] = curve[i];
    if (x <= x1) return y0 + ((x - x0) / (x1 - x0)) * (y1 - y0);
  }
  return after;
};

const slopeAt = (x, y) => {
  if (y > heightAt(curveC, x, 999, 354)) return 0.25;
  if (y > heightAt(curveB, x, 430, 109)) return 0.345;
  if (y > heightAt(curveA, x, 250, 97)) return 0.43;
  return 0.53;
};

const down = (x) => {
  let d = `M${x} 97`;
  let s = null;
  for (let y = 97; y <= 436; y += 3) {
    const n = slopeAt(x, y);
    if (n !== s) d += `L${x.toFixed(1)} ${y}`;
    s = n;
    x += n * 3;
  }
  return d + `L${x.toFixed(1)} 439`;
};

const path = (pts) => "M" + pts.map((p) => p.join(" ")).join("L");

const meshTops = [
  437, 455, 474, 492, 509, 526, 553, 585, 625, 676, 735, 797, 819, 842, 865, 888, 912, 935, 958, 980, 1001,
  1021, 1042, 1062, 1082, 1100, 1119, 1138, 1157, 1176, 1194, 1213, 1232,
];
const darkTops = [225, 243, 262, 282, 300, 319, 330, 344, 362, 380, 398, 416];

const bands = [
  ["#a6e800", "175,170 197,235 305,480 443,820 452,815 312,480 200,232 190,163"],
  ["#38e60c", "190,163 200,232 312,480 452,815 472,803 350,480 228,215 207,152"],
  ["#2fe6a6", "207,152 228,215 350,480 472,803 490,790 375,480 250,200 232,137"],
  ["#10bcd0", "232,137 250,200 375,480 490,790 505,780 392,480 262,190 248,125"],
  ["#2479ec", "248,125 262,190 392,480 505,780 520,770 412,480 275,180 262,110"],
  ["#0b0bb4", "262,110 275,180 412,480 520,770 533,757 525,690 440,480 290,130 265,106"],
];

const SceneDrawing = () => (
  <Scene viewBox="395 98 844 336" preserveAspectRatio="xMidYMid slice" aria-hidden="true">
    <defs>
      <linearGradient id="wall" gradientUnits="userSpaceOnUse" x1="800" y1="330" x2="1150" y2="200">
        <stop offset="0" stopColor="#a9a9a9" />
        <stop offset=".3" stopColor="#b4b4b4" />
        <stop offset=".6" stopColor="#c8c8c8" />
        <stop offset="1" stopColor="#cacaca" />
      </linearGradient>
      <linearGradient id="shade" gradientUnits="userSpaceOnUse" x1="395" y1="97" x2="470" y2="260">
        <stop offset="0" stopColor="#868686" />
        <stop offset="1" stopColor="#6f6f6f" />
      </linearGradient>
    </defs>
    <rect x="395" y="97" width="846" height="340" fill="#adadad" />
    <path fill="url(#wall)" d="M735 97H1241V437H867L815 285Z" />
    <path fill="#b5b5b5" d="M676 97H735L815 285L867 437H812L767 302Z" />
    <path fill="#c9c9c9" d="M625 97H676L767 302L812 437H764L731 325Z" />
    <path fill="#b0b0b0" d="M1192 97H1241V240Z" />
    <g fill="none" stroke="#767676" strokeWidth="1">
      {meshTops.map((x) => (
        <path key={x} d={down(x)} />
      ))}
      <path strokeWidth="1.300" d={path(curveA)} />
      <path strokeWidth="1.300" d={path(curveB)} />
      <path strokeWidth="1.300" d={path(curveC)} />
    </g>
    <path fill="url(#shade)" d="M395 97H436L516 247L555 337L597 437H395Z" />
    <clipPath id="darkFace">
      <path d="M395 97H436L516 247L555 337L597 437H395Z" />
    </clipPath>
    <g clipPath="url(#darkFace)" fill="none" stroke="#505050" strokeWidth="1">
      {darkTops.map((x) => (
        <path key={x} d={`M${x} 97L${x + 178} 437`} />
      ))}
      <path d="M395 272L450 250L505 227" />
    </g>
    <g transform="translate(555 90) scale(.3333)">
      {bands.map(([c, pts]) => (
        <polygon key={c} fill={c} points={pts} />
      ))}
      <path fill="none" stroke="#25405a" strokeWidth="3" d="M197 235L272 180M415 765L510 705" />
      <circle cx="513" cy="699" r="6" fill="#fff" />
    </g>
    <path stroke="#1414d2" strokeWidth="2.500" d="M405 388l8 22" />
    <path fill="#e01616" d="M431 409l12-5v6z" />
    <path fill="#19d819" d="M405 417l8 2-6 6z" />
  </Scene>
);

/* ------------------------------------------------------------------- data */

const menus = ["Model", "Results", "Annotations", "Tools", "Preferences", "Applications", "Help"];

/* "v" drop arrow, "V" disabled drop arrow, ":" grip, "|" rule, "!" prefix disabled */
const mainTools = [
  "v", "importModel", "v", "exportModel", "v", "exportPpt", "v", "|", "!person", "folderRainbow", "v", ":",
  "pageAdd", "!pageDelete", "window", "v", "!pageSwap", "!pageExpand", "pageRevert", ":", "!cut", "copy", "v",
  "!paste", "V", "!sendTo", "V", ":", "zoomFit", "back", "axXY", "axXYd", "axXZ", "axXZf", "axYZ", "axYZf", "iso",
  "screenPaint", "!screenUser", "V", ":", "zoomPM", "zoomBox", "rotate3d", "hand", "leftRight", "upDown", "spin",
];
const captureTools = ["captureArea", "videoArea", "videoDash", ":", "folderWave", "saveWave", "wave"];
const resultTools = [
  "cubeWire", "v", "cubeFull", "v", "cubes", "mirror", "green", ":", "rainbowPlain", "strips", "vectorPlane",
  "cubeVector", "armDeform", "isoValue", "stripsX", "stream", "dish", "infoTable", "tripodLens", "moveBox", "pipe", ":",
];
const lateTools = ["note", "arm", "cubeVideo", "report"];
const animTools = [":", "animMode", "v", "first", "rewind", "play", "forward", "last"];
const sideTools = [
  ["meshRed", "slab"], ["meshPaint", "eyeOne"], ["meshPart", "eyePick"], ["meshFull", "eyeBoxes"],
  ["meshRedFull", "eyeHollow"], ["armSwap", "eyeReverse"], ["monitor", "meshPart"],
];

const legend = [
  ["1.005E+01", "#f00808"], ["9.720E+00", "#ff7410"], ["9.387E+00", "#ffe008"], ["9.053E+00", "#a8fa00"],
  ["8.720E+00", "#30f000"], ["8.386E+00", "#28f0a8"], ["8.053E+00", "#00c8d8"], ["7.719E+00", "#1480ff"],
  ["7.386E+00", "#0808c0"], ["7.052E+00", "transparent"],
];

const Tools = ({ items }) =>
  items.map((t, i) => {
    if (t === "v" || t === "V") return <DropButton key={i} aria-label="More" disabled={t === "V"} />;
    if (t === ":") return <Grip key={i} />;
    if (t === "|") return <Rule key={i} />;
    const off = t[0] === "!";
    const name = off ? t.slice(1) : t;
    return (
      <ToolButton key={i} aria-label={name} disabled={off}>
        <Glyph name={name} />
      </ToolButton>
    );
  });

const Down = ({ bg, solid }) => (
  <Chevron viewBox="0 0 11 12" $bg={bg} aria-hidden="true">
    {solid ? <path fill="#111" d="M2 5h7L5.500 9z" /> : <path fill="none" stroke="#555" strokeWidth="2" d="M2.500 4.500l3 3 3-3" />}
  </Chevron>
);

const Pick = ({ label, value, w, h, pad, indent, open, solid, sunk, bg, disabled }) => (
  <SelectFrame $w={w} $h={h} $open={open} $sunk={sunk} $bg={bg}>
    <SelectBox aria-label={label} $pad={pad} $indent={indent} disabled={disabled}>
      <option>{value}</option>
    </SelectBox>
    <Down solid={solid} bg={solid ? "#fff" : undefined} />
  </SelectFrame>
);

const Tri = ({ up, c = "#b4b4b4" }) => (
  <ArrowMark viewBox="0 0 9 11" aria-hidden="true">
    <path fill={c} d={up ? "M1 7h7L4.500 3z" : "M1 4h7L4.500 8z"} />
  </ArrowMark>
);

const Option = ({ children, checked, off }) => (
  <CheckLabel $off={off}>
    <Check defaultChecked={checked} disabled={off} />
    {children}
  </CheckLabel>
);

export default function App() {
  return (
    <Screen>
      <Global />
      <MenuBar>
        {menus.map((m) => (
          <MenuItem key={m}>{m}</MenuItem>
        ))}
      </MenuBar>
      <ToolRow $h={33}>
        <Tools items={mainTools} />
        <Spacer $w={30} />
        <ToolButton aria-label="Previous page"><Glyph name="prev" /></ToolButton>
        <ToolButton aria-label="Next page"><Glyph name="next" /></ToolButton>
        <PageInput id="page" defaultValue="1" />
        <PageTotal htmlFor="page">of 1</PageTotal>
      </ToolRow>
      <ToolRow>
        <ClippedTool><Glyph name="camera" /></ClippedTool>
        <Tools items={captureTools} />
      </ToolRow>

      <Body>
        <Browser>
          <TabRow><Tab aria-label="Close tab">×</Tab></TabRow>
          <BrowserBody>
            <ToolRow $h={28}>
              <Tools items={["folderMesh", "folderNodes", "folderCube", "folderSlabs", "folderGreen"]} />
            </ToolRow>
            <FieldStack>
              <Pick label="Load case" open indent={-10} value="ULTS TRANSFER FOR 3D TIRE MODEL" />
              <Pick label="Step" open indent={-6} value="RANSFERRED RESULTS TO EQUILIBRIUM" />
              <Pick label="Frame" open indent={-2} value={"o Time =\u00a0\u00a0 1.000"} />
              <SearchField>
                <SearchInput aria-label="Search" />
                <svg width="24" height="16" viewBox="0 0 24 16" aria-hidden="true">
                  <circle cx="6" cy="7" r="4" fill="none" stroke="#444" strokeWidth="1.300" />
                  <path stroke="#444" strokeWidth="2" d="M9 10l3 4" />
                  <path fill="none" stroke="#555" strokeWidth="2" d="M15.500 6l3 3 3-3" />
                </svg>
              </SearchField>
            </FieldStack>
            <FilterRow>
              <Tools items={["slab", "v", "cursor", "highlight", "eyePM", "eyeOne"]} />
            </FilterRow>
            <ColumnHeads>
              <ColumnHead />
              <ColumnHead><Glyph name="info" size={18} /></ColumnHead>
              <ColumnHead>ID</ColumnHead>
              <ColumnHead><Glyph name="wheel" size={17} /></ColumnHead>
              <ColumnHead><Glyph name="greyCube" size={17} /></ColumnHead>
              <ColumnHead />
            </ColumnHeads>
            <Tree>
              {["rarchy (4)", "21)", "", "", "", "3)"].map((t, i) => (
                <TreeItem key={i}>{t}</TreeItem>
              ))}
            </Tree>
            <Splitter>
              <SplitDots />
              <svg width="9" height="8" viewBox="0 0 9 8" aria-hidden="true">
                <path fill="none" stroke="#333" strokeWidth="1.300" d="M2 1l2.500 2L7 1M2 4.500l2.500 2 2.500-2" />
              </svg>
            </Splitter>
            <Entity><EntityBody /></Entity>
          </BrowserBody>
        </Browser>

        <Workspace>
          <ViewRow>
            <SideTools>
              <SideGrip $in={3} />
              <SideGrip $in={8} />
              {sideTools.map(([a, b], i) => (
                <React.Fragment key={i}>
                  <SideCell><Tools items={[a]} /></SideCell>
                  <SideCell><Tools items={i === 0 ? [b, "v"] : [b]} /></SideCell>
                </React.Fragment>
              ))}
            </SideTools>
            <Viewer>
              <SceneDrawing />
              <Overlay $x={9} $y={4}>
                <div>Contour Plot</div>
                <div>Displacement(Mag)</div>
                <div>Analysis system</div>
                <Legend>
                  {legend.map(([t, c]) => (
                    <LegendRow key={t}>
                      <Swatch $c={`linear-gradient(${c}, ${c})`} />
                      {t}
                    </LegendRow>
                  ))}
                </Legend>
              </Overlay>
              <Overlay $x={9} $y={235}>
                <NoResult><NoSwatch />No Result</NoResult>
              </Overlay>
              <Overlay $x={9} $y={257} $size={12}>
                <div>{"Max =  1.005E+01"}</div>
                <div>PART-1-1 170641</div>
                <div>{"Min =  7.052E+00"}</div>
                <div>PART-1-1 180679</div>
              </Overlay>
              <Overlay $x={9} $y={268} $size={12}>Z</Overlay>
              <Overlay $x={54} $y={291} $size={12}>X</Overlay>
              <Overlay $x={10} $y={312} $size={12}>Y</Overlay>
              <Overlay $x={235} $y={68} $size={12}>
                <div>170641</div>
                <div>{"Static Max. Value =   10.0540018"}</div>
              </Overlay>
              <Overlay $x={334} $y={225} $size={12}>
                <div>180679</div>
                <div>{"Static Min. Value =   7.0519786"}</div>
              </Overlay>
              <Title>
                <div>{"1: SYMMETRIC RESULTS TRANSFER FOR 3D TIRE MODEL"}</div>
                <div>{"Step-1: 1: BRING TRANSFERRED RESULTS TO EQUILIBRIUM : Increment    1: Step Time =   1.000 : Frame 2"}</div>
              </Title>
            </Viewer>
          </ViewRow>

          <ToolRow $h={31} $pad={1}>
            <Tools items={[":", "contour", "v", ":", "wheel", "cubeColor"]} />
            <Pick label="Mesh color" value="By Comp" w={65} h={18} pad={2} />
            <Tools items={resultTools} />
            <ToolButton aria-label="Measure">
              <Glyph name="measure" />
              <Marker viewBox="0 0 52 60" aria-hidden="true">
                <path
                  fill="#f7ee00"
                  fillRule="evenodd"
                  d="M5 5Q12 0 20 1Q33 1 37 6Q42 14 43 26Q45 34 47 40Q48 48 46 54Q36 58 25 56Q14 50 7 41Q1 34 1 26Q2 14 5 5ZM16 15Q23 11 30 14Q36 21 38 29Q42 36 40 42Q34 46 27 43Q18 37 13 28Q12 20 16 15Z"
                />
              </Marker>
            </ToolButton>
            <Tools items={lateTools} />
          </ToolRow>
          <ToolRow $pad={1}>
            <Tools items={animTools} />
            <Frames type="range" min="0" max="100" defaultValue="100" aria-label="Current frame" />
            <ToolButton aria-label="Animation settings"><Glyph name="gear" /></ToolButton>
          </ToolRow>
          <Divider />

          <Measure>
            <Column $w={224}>
              <TableFrame>
                <GroupTable>
                  <thead>
                    <tr>
                      <Th $w={23} aria-label="Shown" />
                      <Th $w={128}>Measure Groups<Sort /></Th>
                      <Th $w={57}>Time<Sort /></Th>
                    </tr>
                  </thead>
                  <tbody>
                    <tr>
                      <Td $pl={4}><Check aria-label="Show Static MinMax Result" defaultChecked /></Td>
                      <Td colSpan={2}>Static MinMax Result</Td>
                    </tr>
                    <tr>
                      <Td $pl={4}><Check aria-label="Show Dynamic MinMax Result" /></Td>
                      <Td colSpan={2} $on>Dynamic MinMax Result</Td>
                    </tr>
                  </tbody>
                </GroupTable>
                <ScrollBar>
                  <ArrowMark viewBox="0 0 9 11" aria-hidden="true"><path fill="none" stroke="#555" strokeWidth="2" d="M1.500 7l3-3 3 3" /></ArrowMark>
                  <ScrollThumb />
                  <ArrowMark viewBox="0 0 9 11" aria-hidden="true"><path fill="none" stroke="#555" strokeWidth="2" d="M1.500 4l3 3 3-3" /></ArrowMark>
                </ScrollBar>
              </TableFrame>
              <Line>
                <PushButton>Delete</PushButton>
                <PushButton>Add</PushButton>
              </Line>
            </Column>

            <Column $w={234} $gap={15}>
              <Pick label="Measure group" value="Dynamic MinMax Result" w={232} h={21} pad={3} sunk bg="#f0f0f0" disabled />
              <Line $mt={3} $h={22} $pl={2} $justify="space-between">
                <Option off>Multi select</Option>
                <Line>
                  <PushButton $w={22} $h={22} aria-label="Entity type">
                    <svg width="8" height="6" viewBox="0 0 8 6" aria-hidden="true"><path fill="none" stroke="#444" strokeWidth="1.500" d="M1.500 1.500L4 4l2.500-2.500" /></svg>
                  </PushButton>
                  <PushButton $w={109} $h={22} $bg="#e8e85e" disabled>Nodes</PushButton>
                  <PushButton $w={23} $h={22} aria-label="Reset">
                    <svg width="8" height="8" viewBox="0 0 8 8" aria-hidden="true"><path fill="none" stroke="#333" strokeWidth="1.200" d="M1 1v6M4 1L2 4l2 3M7 1L5 4l2 3" /></svg>
                  </PushButton>
                </Line>
              </Line>
              <Line $mt={7} $pl={2} $align="flex-start" $grow>
                <Column $w={169}>
                  <Option checked>Min</Option>
                  <Option checked>Max</Option>
                </Column>
                <Column>
                  <Option checked>ID</Option>
                  <Option>Name</Option>
                  <Option checked>System</Option>
                </Column>
              </Line>
              <Line $justify="flex-end" $gap={4}>
                <PushButton $w={78} disabled>Add Items</PushButton>
                <Spacer $w={0} />
              </Line>
            </Column>

            <Column $w={200} $gap={14}>
              <Line $gap={4} $h={22}>
                <PushButton $w={78} $h={22} disabled>Resolved in...</PushButton>
                <Sunken>Global System</Sunken>
              </Line>
              <Line $mt={1} $align="stretch" $grow>
                <Column $w={180}>
                  <ListBox>
                    <ListItem $on>Min</ListItem>
                    <ListItem>Max</ListItem>
                  </ListBox>
                  <Line><PushButton disabled>Delete</PushButton></Line>
                </Column>
                <ListArrows>
                  <Tri up />
                  <Tri />
                </ListArrows>
              </Line>
            </Column>

            <Options $w={155} $gap={8}>
              <Line $h={13}>Display options:</Line>
              <Line $pl={10}><Option checked>Transparency</Option></Line>
              <Line $pl={10}><Option>Auto-hide</Option></Line>
              <Line $pl={10}><Option checked>Prefix</Option></Line>
              <FieldLine>
                <FieldLabel>Format:</FieldLabel>
                <Pick label="Format" value="Fixed" w={69} h={21} pad={3} solid sunk />
              </FieldLine>
              <FieldLine $mark>
                <FieldLabel htmlFor="precision">Precision:</FieldLabel>
                <NumberFrame>
                  <NumberBox id="precision" defaultValue="7" />
                  <Spin>
                    <svg width="9" height="16" viewBox="0 0 9 16" aria-hidden="true"><path fill="#333" d="M2 6h5L4.500 3zM0 8h9v1H0zM2 11h5l-2.500 3z" /></svg>
                  </Spin>
                </NumberFrame>
              </FieldLine>
              <FieldLine>
                <FieldLabel>Angle:</FieldLabel>
                <Pick label="Angle" value="Degrees" w={69} h={21} pad={3} solid sunk />
              </FieldLine>
            </Options>

            <Column $gap={8}>
              <Line><PushButton $w={78} $h={22}>Create Curve</PushButton></Line>
              <Line $mt={8} $gap={7} $align="center">
                <FontButton $w={22} $h={22} aria-label="Font">A</FontButton>
                <ColorButton aria-label="Color" />
                <Line $pl={2}>Color</Line>
              </Line>
            </Column>
          </Measure>
        </Workspace>
      </Body>

      <TaskBar>
        <TaskSearch>
          <TaskHint>里输入你要搜索的内容</TaskHint>
          <svg width="70" height="20" viewBox="0 0 70 20" aria-hidden="true">
            <path fill="#6a9c34" d="M2 20q-3-8 6-8 2-5 8-4 6-4 10 0 8 0 8 6l-4 6z" />
            <path fill="#8a5a2c" d="M18 12h6l2 8h-8z" />
            <path fill="#d9a764" d="M34 20q4-10 16-10 12 1 14 10z" />
            <path fill="#7cb342" d="M44 20q8-12 26-12v12z" />
            <circle cx="2" cy="9" r="2" fill="#f2b13c" />
            <circle cx="58" cy="9" r="2" fill="#63c3e8" />
            <circle cx="66" cy="13" r="4" fill="#e0583c" />
          </svg>
        </TaskSearch>
        {["cortana", "taskView", "edge", "chrome", "hw", "hwActive", "wechat"].map((n) => (
          <TaskButton key={n} aria-label={n} $on={n === "hwActive"}><Glyph name={n} /></TaskButton>
        ))}
        <Tray>
          <TaskButton $w={26} $top={13} aria-label="Hidden icons"><Glyph name="chevUp" size={14} /></TaskButton>
          <TaskButton $w={20} $top={12} aria-label="Network"><Glyph name="net" size={14} /></TaskButton>
          <TaskButton $w={24} $top={11} aria-label="Volume"><Glyph name="speaker" size={16} /></TaskButton>
          <TaskButton $w={26} $top={9} aria-label="Keyboard"><Glyph name="keyboard" size={18} /></TaskButton>
          <Ime>中</Ime>
          <Clock>17:02</Clock>
          <TaskButton $w={44} $top={9} aria-label="Notifications"><Glyph name="notify" size={18} /></TaskButton>
          <Spacer $w={4} />
        </Tray>
      </TaskBar>
      <Watermark>知乎 @杨真心</Watermark>
    </Screen>
  );
}
